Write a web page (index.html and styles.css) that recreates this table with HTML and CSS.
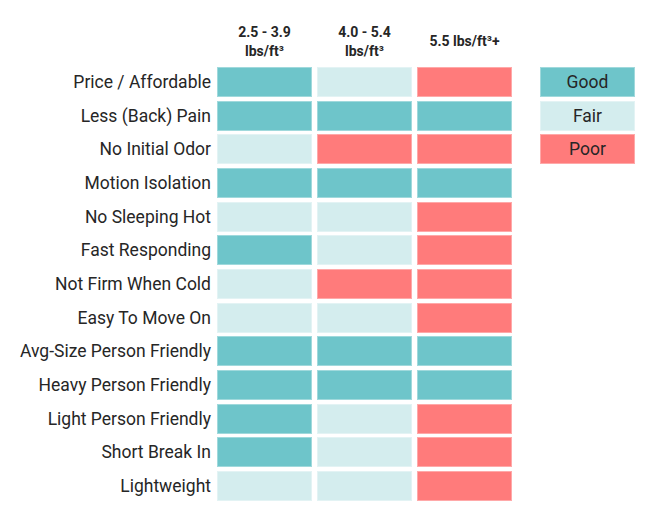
FILE: index.html
```html
<!DOCTYPE html>
<html>
<head>
<meta charset="utf-8">
<link rel="stylesheet" href="styles.css">
</head>
<body>
<div class="chart">
  <div class="corner"></div>
  <div class="head">2.5 - 3.9<br>lbs/ft³</div>
  <div class="head">4.0 - 5.4<br>lbs/ft³</div>
  <div class="head">5.5 lbs/ft³+</div>
  <div class="corner"></div>

  <div class="label">Price / Affordable</div>
  <div class="cell good"></div><div class="cell fair"></div><div class="cell poor"></div>
  <div class="cell legend good">Good</div>

  <div class="label">Less (Back) Pain</div>
  <div class="cell good"></div><div class="cell good"></div><div class="cell good"></div>
  <div class="cell legend fair">Fair</div>

  <div class="label">No Initial Odor</div>
  <div class="cell fair"></div><div class="cell poor"></div><div class="cell poor"></div>
  <div class="cell legend poor">Poor</div>

  <div class="label">Motion Isolation</div>
  <div class="cell good"></div><div class="cell good"></div><div class="cell good"></div>
  <div class="empty"></div>

  <div class="label">No Sleeping Hot</div>
  <div class="cell fair"></div><div class="cell fair"></div><div class="cell poor"></div>
  <div class="empty"></div>

  <div class="label">Fast Responding</div>
  <div class="cell good"></div><div class="cell fair"></div><div class="cell poor"></div>
  <div class="empty"></div>

  <div class="label">Not Firm When Cold</div>
  <div class="cell fair"></div><div class="cell poor"></div><div class="cell poor"></div>
  <div class="empty"></div>

  <div class="label">Easy To Move On</div>
  <div class="cell fair"></div><div class="cell fair"></div><div class="cell poor"></div>
  <div class="empty"></div>

  <div class="label">Avg-Size Person Friendly</div>
  <div class="cell good"></div><div class="cell good"></div><div class="cell good"></div>
  <div class="empty"></div>

  <div class="label">Heavy Person Friendly</div>
  <div class="cell good"></div><div class="cell good"></div><div class="cell good"></div>
  <div class="empty"></div>

  <div class="label">Light Person Friendly</div>
  <div class="cell good"></div><div class="cell fair"></div><div class="cell poor"></div>
  <div class="empty"></div>

  <div class="label">Short Break In</div>
  <div class="cell good"></div><div class="cell fair"></div><div class="cell poor"></div>
  <div class="empty"></div>

  <div class="label">Lightweight</div>
  <div class="cell fair"></div><div class="cell fair"></div><div class="cell poor"></div>
  <div class="empty"></div>
</div>
</body>
</html>
```
FILE: styles.css
```css
html, body {
  margin: 0;
  padding: 0;
  background: #ffffff;
}
body {
  font-family: Roboto, "Liberation Sans", sans-serif;
  color: #262626;
}
.chart {
  display: grid;
  grid-template-columns: 212px 95px 95px 95px 95px;
  grid-template-rows: 63px;
  grid-auto-rows: 30px;
  column-gap: 5px;
  row-gap: 3.67px;
  padding-top: 0.33px;
}
.head {
  font-size: 14px;
  font-weight: 700;
  line-height: 19px;
  text-align: center;
  display: flex;
  align-items: center;
  justify-content: center;
  padding-top: 20px;
}
.label {
  font-size: 17.5px;
  text-align: right;
  padding-right: 1px;
  display: flex;
  align-items: center;
  justify-content: flex-end;
  white-space: nowrap;
}
.cell {
  box-sizing: border-box;
  border: 1px solid rgba(255, 255, 255, 0.35);
}
.legend {
  margin-left: 23px;
  margin-right: -23px;
  font-size: 17.5px;
  display: flex;
  align-items: center;
  justify-content: center;
}
.good { background: #6ec5ca; }
.fair { background: #d4edee; }
.poor { background: #ff7b7b; }
```
